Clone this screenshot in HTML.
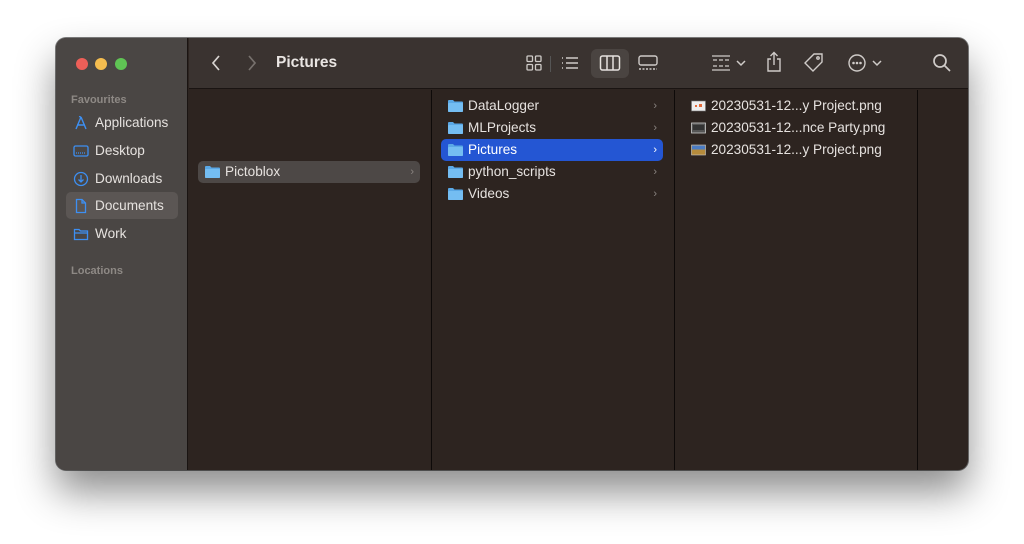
<!DOCTYPE html>
<html><head><meta charset="utf-8"><style>
*{margin:0;padding:0;box-sizing:border-box}
body{width:1024px;height:544px;background:#fff;font-family:"Liberation Sans",sans-serif;position:relative;overflow:hidden}
.win{position:absolute;left:56px;top:38px;width:912px;height:432px;border-radius:10px;overflow:hidden;background:#2d2420;box-shadow:0 22px 40px rgba(0,0,0,.45),0 0 0 1px rgba(0,0,0,.5)}
.side{position:absolute;left:0;top:0;width:132px;height:432px;background:#4a4644;border-right:1px solid #1a1412}
.tb{position:absolute;left:133px;top:0;right:0;height:51px;background:#3a3330;border-bottom:1px solid #1a1412}
.dot{position:absolute;top:20px;width:12px;height:12px;border-radius:50%}
.sh{position:absolute;left:15px;font-size:11px;font-weight:bold;color:#8e8985}
.si{position:absolute;left:10px;width:112px;height:27px;border-radius:5px;color:#e6e2df;font-size:13.6px;line-height:27px;padding-left:29px}
.si svg{position:absolute;left:7px;top:6px}
.col{position:absolute;top:52px;height:380px;border-right:1px solid #0e0a09}
.row{position:absolute;height:22px;border-radius:5px;color:#e6e2df;font-size:13.6px;line-height:22px;padding-left:27px}
.row .chev{position:absolute;right:6px;top:0;color:#8a8480;font-size:11px}
.fold{position:absolute;left:7px;top:5px;width:15px;height:12px}
.t{position:absolute;color:#e9e5e2}
</style></head><body>
<div class="win">
 <div class="side">
  <div class="dot" style="left:20px;background:#ed5f58"></div>
  <div class="dot" style="left:39px;background:#f5bd4f"></div>
  <div class="dot" style="left:59px;background:#5fc454"></div>
  <div class="sh" style="top:56px">Favourites</div>
  <div class="si" style="top:71px"><svg width="16" height="16" viewBox="0 0 16 16" fill="none" stroke="#3d8ff2" stroke-width="1.4"><path d="M8 2 L3 14 M8 2 L13 14 M4 10 H12 M6 1.5 L8 2"/></svg>Applications</div>
  <div class="si" style="top:99px"><svg width="16" height="16" viewBox="0 0 16 16" fill="none" stroke="#3d8ff2" stroke-width="1.3"><rect x="1" y="3" width="14" height="10" rx="1.5"/><path d="M3 10 H13" stroke-dasharray="1 1"/></svg>Desktop</div>
  <div class="si" style="top:127px"><svg width="16" height="16" viewBox="0 0 16 16" fill="none" stroke="#3d8ff2" stroke-width="1.3"><circle cx="8" cy="8" r="6.5"/><path d="M8 4 V11 M5.5 8.5 L8 11 L10.5 8.5"/></svg>Downloads</div>
  <div class="si" style="top:154px;background:#5b5654"><svg width="16" height="16" viewBox="0 0 16 16" fill="none" stroke="#3d8ff2" stroke-width="1.3"><path d="M3.5 1.5 H9 L12.5 5 V14.5 H3.5 Z M9 1.5 V5 H12.5"/></svg>Documents</div>
  <div class="si" style="top:182px"><svg width="16" height="16" viewBox="0 0 16 16" fill="none" stroke="#3d8ff2" stroke-width="1.3"><path d="M1.5 3.5 H6 L7.5 5 H14.5 V13.5 H1.5 Z M1.5 7 H14.5"/></svg>Work</div>
  <div class="sh" style="top:227px">Locations</div>
 </div>
 <div class="tb">
  <svg style="position:absolute;left:22px;top:17px" width="10" height="16" viewBox="0 0 10 16" fill="none" stroke="#d8d4d1" stroke-width="1.7"><path d="M8 1 L2 8 L8 15"/></svg>
  <svg style="position:absolute;left:58px;top:17px" width="10" height="16" viewBox="0 0 10 16" fill="none" stroke="#77716d" stroke-width="1.7"><path d="M2 1 L8 8 L2 15"/></svg>
  <div class="t" style="left:87px;top:16px;font-size:15.5px;font-weight:bold">Pictures</div>
  <svg style="position:absolute;left:336px;top:16px" width="18" height="18" viewBox="0 0 18 18" fill="none" stroke="#cfcbc8" stroke-width="1.3"><rect x="2" y="2" width="5.5" height="5.5" rx="1"/><rect x="10.5" y="2" width="5.5" height="5.5" rx="1"/><rect x="2" y="10.5" width="5.5" height="5.5" rx="1"/><rect x="10.5" y="10.5" width="5.5" height="5.5" rx="1"/></svg>
  <div style="position:absolute;left:361px;top:18px;width:1px;height:16px;background:#555"></div>
  <svg style="position:absolute;left:371px;top:16px" width="20" height="18" viewBox="0 0 20 18" fill="none" stroke="#cfcbc8" stroke-width="1.5"><path d="M2 4 H3 M2 9 H3 M2 14 H3 M6 4 H18 M6 9 H18 M6 14 H18"/></svg>
  <div style="position:absolute;left:402px;top:11px;width:38px;height:29px;border-radius:6px;background:#4a4441"></div>
  <svg style="position:absolute;left:410px;top:16px" width="22" height="18" viewBox="0 0 22 18" fill="none" stroke="#e6e2df" stroke-width="1.5"><rect x="1.5" y="2" width="19" height="14" rx="2"/><path d="M8 2 V16 M14 2 V16"/></svg>
  <svg style="position:absolute;left:448px;top:16px" width="22" height="18" viewBox="0 0 22 18" fill="none" stroke="#cfcbc8" stroke-width="1.4"><rect x="2" y="2" width="18" height="9" rx="2"/><path d="M2 15 H20" stroke-dasharray="2 1.5"/></svg>
  <svg style="position:absolute;left:522px;top:16px" width="20" height="18" viewBox="0 0 20 18" fill="none" stroke="#cfcbc8" stroke-width="1.3"><path d="M1 2 H19 M1 16 H19"/><path d="M2 6 H18 M2 12 H18" stroke-dasharray="4 2"/></svg>
  <svg style="position:absolute;left:547px;top:22px" width="10" height="7" viewBox="0 0 10 7" fill="none" stroke="#cfcbc8" stroke-width="1.5"><path d="M1 1 L5 5 L9 1"/></svg>
  <svg style="position:absolute;left:576px;top:13px" width="18" height="22" viewBox="0 0 18 22" fill="none" stroke="#cfcbc8" stroke-width="1.4"><path d="M6 8 H3 V20 H15 V8 H12 M9 14 V2 M5.5 5 L9 1.5 L12.5 5"/></svg>
  <svg style="position:absolute;left:614px;top:14px" width="22" height="22" viewBox="0 0 22 22" fill="none" stroke="#cfcbc8" stroke-width="1.4"><path d="M11 2 H19 V10 L10 19 L2 11 Z"/><circle cx="15" cy="6" r="1.2"/></svg>
  <svg style="position:absolute;left:658px;top:15px" width="20" height="20" viewBox="0 0 20 20" fill="none" stroke="#cfcbc8" stroke-width="1.4"><circle cx="10" cy="10" r="8"/><circle cx="6.5" cy="10" r=".6" fill="#cfcbc8"/><circle cx="10" cy="10" r=".6" fill="#cfcbc8"/><circle cx="13.5" cy="10" r=".6" fill="#cfcbc8"/></svg>
  <svg style="position:absolute;left:683px;top:22px" width="10" height="7" viewBox="0 0 10 7" fill="none" stroke="#cfcbc8" stroke-width="1.5"><path d="M1 1 L5 5 L9 1"/></svg>
  <svg style="position:absolute;left:743px;top:15px" width="20" height="20" viewBox="0 0 20 20" fill="none" stroke="#cfcbc8" stroke-width="1.7"><circle cx="8" cy="8" r="6"/><path d="M12.5 12.5 L18 18"/></svg>
 </div>
 <div class="col" style="left:133px;width:243px">
  <div class="row" style="left:9px;top:71px;width:222px;background:#4d4846">
   <svg class="fold" viewBox="0 0 15 12"><path d="M0 1 Q0 0 1 0 H5 L6.5 1.5 H14 Q15 1.5 15 2.5 V11 Q15 12 14 12 H1 Q0 12 0 11 Z" fill="#5aa8e6"/><rect x="0" y="3" width="15" height="9" rx="1" fill="#74bdf2"/></svg>Pictoblox<span class="chev">›</span></div>
 </div>
 <div class="col" style="left:376px;width:243px">
  <div class="row" style="left:9px;top:5px;width:222px"><svg class="fold" viewBox="0 0 15 12"><path d="M0 1 Q0 0 1 0 H5 L6.5 1.5 H14 Q15 1.5 15 2.5 V11 Q15 12 14 12 H1 Q0 12 0 11 Z" fill="#5aa8e6"/><rect x="0" y="3" width="15" height="9" rx="1" fill="#74bdf2"/></svg>DataLogger<span class="chev">›</span></div>
  <div class="row" style="left:9px;top:27px;width:222px"><svg class="fold" viewBox="0 0 15 12"><path d="M0 1 Q0 0 1 0 H5 L6.5 1.5 H14 Q15 1.5 15 2.5 V11 Q15 12 14 12 H1 Q0 12 0 11 Z" fill="#5aa8e6"/><rect x="0" y="3" width="15" height="9" rx="1" fill="#74bdf2"/></svg>MLProjects<span class="chev">›</span></div>
  <div class="row" style="left:9px;top:49px;width:222px;background:#2456d3;color:#fff"><svg class="fold" viewBox="0 0 15 12"><path d="M0 1 Q0 0 1 0 H5 L6.5 1.5 H14 Q15 1.5 15 2.5 V11 Q15 12 14 12 H1 Q0 12 0 11 Z" fill="#5aa8e6"/><rect x="0" y="3" width="15" height="9" rx="1" fill="#74bdf2"/></svg>Pictures<span class="chev" style="color:#fff">›</span></div>
  <div class="row" style="left:9px;top:71px;width:222px"><svg class="fold" viewBox="0 0 15 12"><path d="M0 1 Q0 0 1 0 H5 L6.5 1.5 H14 Q15 1.5 15 2.5 V11 Q15 12 14 12 H1 Q0 12 0 11 Z" fill="#5aa8e6"/><rect x="0" y="3" width="15" height="9" rx="1" fill="#74bdf2"/></svg>python_scripts<span class="chev">›</span></div>
  <div class="row" style="left:9px;top:93px;width:222px"><svg class="fold" viewBox="0 0 15 12"><path d="M0 1 Q0 0 1 0 H5 L6.5 1.5 H14 Q15 1.5 15 2.5 V11 Q15 12 14 12 H1 Q0 12 0 11 Z" fill="#5aa8e6"/><rect x="0" y="3" width="15" height="9" rx="1" fill="#74bdf2"/></svg>Videos<span class="chev">›</span></div>
 </div>
 <div class="col" style="left:619px;width:243px">
  <div class="row" style="left:9px;top:5px;width:230px"><svg class="fold" viewBox="0 0 15 12"><rect x=".5" y="1" width="14" height="10" fill="#eee" stroke="#777" stroke-width=".6"/><rect x="4" y="5" width="2" height="2" fill="#e46a3a"/><rect x="8" y="4" width="3" height="3" fill="#e46a3a"/></svg>20230531-12...y Project.png</div>
  <div class="row" style="left:9px;top:27px;width:230px"><svg class="fold" viewBox="0 0 15 12"><rect x=".5" y="1" width="14" height="10" fill="#555" stroke="#ccc" stroke-width=".8"/><rect x="2" y="3" width="11" height="5" fill="#333"/></svg>20230531-12...nce Party.png</div>
  <div class="row" style="left:9px;top:49px;width:230px"><svg class="fold" viewBox="0 0 15 12"><rect x=".5" y="1" width="14" height="10" fill="#b58b3c" stroke="#ccc" stroke-width=".6"/><rect x="1" y="1.5" width="13" height="4" fill="#4b7cc4"/></svg>20230531-12...y Project.png</div>
 </div>
</div>
</body></html>
